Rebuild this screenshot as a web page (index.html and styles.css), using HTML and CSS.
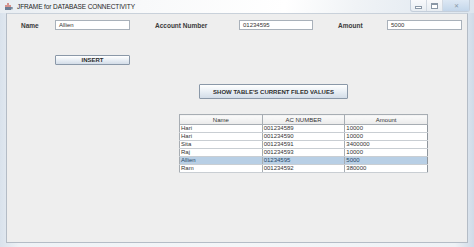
FILE: index.html
```html
<!doctype html>
<html>
  <head>
    <meta charset="utf-8">
    <title>JFRAME for DATABASE CONNECTIVITY</title>
    <link rel="stylesheet" href="styles.css">
  </head>
  <body>
    <div class="window">
      <div class="titlebar">
        <svg class="app-icon" width="9" height="9" viewBox="0 0 9 9">
          <rect x="1" y="5" width="6" height="3" fill="#6a7d94"/>
          <path d="M2 5 L2 3 M4 5 L4 1 M6 5 L6 3" stroke="#c0392b" stroke-width="1"/>
          <rect x="7" y="5.5" width="1.5" height="1.5" fill="none" stroke="#6a7d94" stroke-width="0.6"/>
        </svg>
        <div class="title">JFRAME for DATABASE CONNECTIVITY</div>
        <div class="controls">
          <div class="ctl"><span class="min"></span></div>
          <div class="ctl"><span class="max"></span></div>
          <div class="ctl close"><span class="x">&#x2715;</span></div>
        </div>
      </div>
      <div class="content">
        <div class="fields">
          <label class="lbl lbl-name">Name</label>
          <div class="field f-name">Allien</div>
          <label class="lbl lbl-acc">Account Number</label>
          <div class="field f-acc">01234595</div>
          <label class="lbl lbl-amt">Amount</label>
          <div class="field f-amt">5000</div>
        </div>

        <button class="btn btn-insert">INSERT</button>

        <button class="btn btn-show">SHOW TABLE'S CURRENT FILED VALUES</button>

        <table class="grid">
          <thead>
            <tr><th>Name</th><th>AC NUMBER</th><th>Amount</th></tr>
          </thead>
          <tbody>
            <tr><td>Hari</td><td>001234589</td><td>10000</td></tr>
            <tr><td>Hari</td><td>001234590</td><td>10000</td></tr>
            <tr><td>Sita</td><td>001234591</td><td>3400000</td></tr>
            <tr><td>Raj</td><td>001234593</td><td>10000</td></tr>
            <tr class="selected"><td>Allien</td><td>01234595</td><td>5000</td></tr>
            <tr><td>Ram</td><td>001234592</td><td>380000</td></tr>
          </tbody>
        </table>
      </div>
    </div>
  </body>
</html>
```

FILE: styles.css
```css
html, body {
	margin: 0;
	padding: 0;
}
body {
	width: 474px;
	height: 247px;
	background: #f4f6f8;
	font-family: "Liberation Sans", Arial, sans-serif;
	overflow: hidden;
}
.window {
	width: 474px;
	height: 247px;
	display: flex;
	flex-direction: column;
	background: linear-gradient(to right, #d9e2ec 0%, #eef2f6 4%, #f4f6f8 50%, #eef2f6 96%, #cfdbe8 100%);
}
.titlebar {
	height: 13px;
	display: flex;
	align-items: center;
	background: linear-gradient(100deg, #e8edf2 0%, #f8f9fa 30%, #ffffff 60%, #f0f3f6 75%, #dde6ef 100%);
}
.app-icon {
	margin-left: 4px;
	margin-right: 4px;
}
.title {
	font-size: 6.5px;
	color: #1e1e1e;
	letter-spacing: -0.1px;
	flex: 1;
}
.controls {
	display: flex;
	align-self: flex-start;
	height: 11px;
	margin-right: 4px;
	border: 1px solid #c4ceda;
	border-top: none;
	border-radius: 0 0 3px 3px;
	background: linear-gradient(#f8f9fb, #e8edf2);
}
.ctl {
	width: 15px;
	display: flex;
	align-items: center;
	justify-content: center;
	border-right: 1px solid #d2d9e2;
}
.ctl.close {
	width: 26px;
	border-right: none;
	background: linear-gradient(#dde8f4, #c3d6ea);
}
.min {
	width: 5px;
	height: 1px;
	border: 1px solid #8a97a6;
	margin-top: 4px;
	background: #fff;
}
.max {
	width: 5px;
	height: 3px;
	border: 1px solid #8a97a6;
	border-top-width: 2px;
	background: #fff;
}
.x {
	font-size: 6px;
	color: #8a97a6;
	line-height: 1;
}
.content {
	margin: 0 6px 4px 6px;
	flex: 1;
	background: #eeeeee;
	border: 1px solid #b4bcc6;
	border-top-color: #c9d1da;
}
.fields {
	display: flex;
	align-items: center;
	padding-left: 14px;
	margin-top: 6px;
}
.lbl {
	font-size: 6.5px;
	font-weight: bold;
	color: #3a3a3a;
}
.lbl-name { width: 34px; }
.lbl-acc { width: 84px; margin-left: 25px; }
.lbl-amt { width: 49px; margin-left: 25px; }
.field {
	box-sizing: border-box;
	height: 10px;
	background: #fff;
	border: 1px solid #a9b1ba;
	font-size: 6px;
	color: #333;
	padding-left: 3px;
	line-height: 8px;
}
.f-name { width: 75px; }
.f-acc { width: 74px; }
.f-amt { width: 75px; }
.btn {
	display: block;
	box-sizing: border-box;
	font-family: "Liberation Sans", Arial, sans-serif;
	font-size: 6px;
	font-weight: bold;
	color: #2c2c2c;
	border: 1px solid #8a98a8;
	border-radius: 1px;
	background: linear-gradient(#ffffff, #e9eff5 50%, #d3dde8);
	padding: 0;
}
.btn-insert {
	width: 75px;
	height: 10px;
	margin: 25px 0 0 48px;
}
.btn-show {
	width: 149px;
	height: 15px;
	margin: 19px 0 0 192px;
}
.grid {
	border-collapse: collapse;
	margin: 15px 0 0 172px;
	width: 249px;
	font-size: 6px;
	color: #333;
	background: #fff;
	border: 1px solid #8e959c;
}
.grid th {
	font-weight: normal;
	height: 9px;
	padding: 0;
	background: linear-gradient(#fbfbfb, #eaeaea);
	border: 1px solid #a7adb3;
	text-align: center;
	width: 33.3%;
}
.grid td {
	height: 7px;
	padding: 0 0 0 1px;
	line-height: 7px;
	border-left: 1px solid #a7adb3;
	border-bottom: 1px solid #c9ced3;
}
.grid tr.selected td {
	background: #b8cfe5;
	color: #2a4a6a;
}
```
